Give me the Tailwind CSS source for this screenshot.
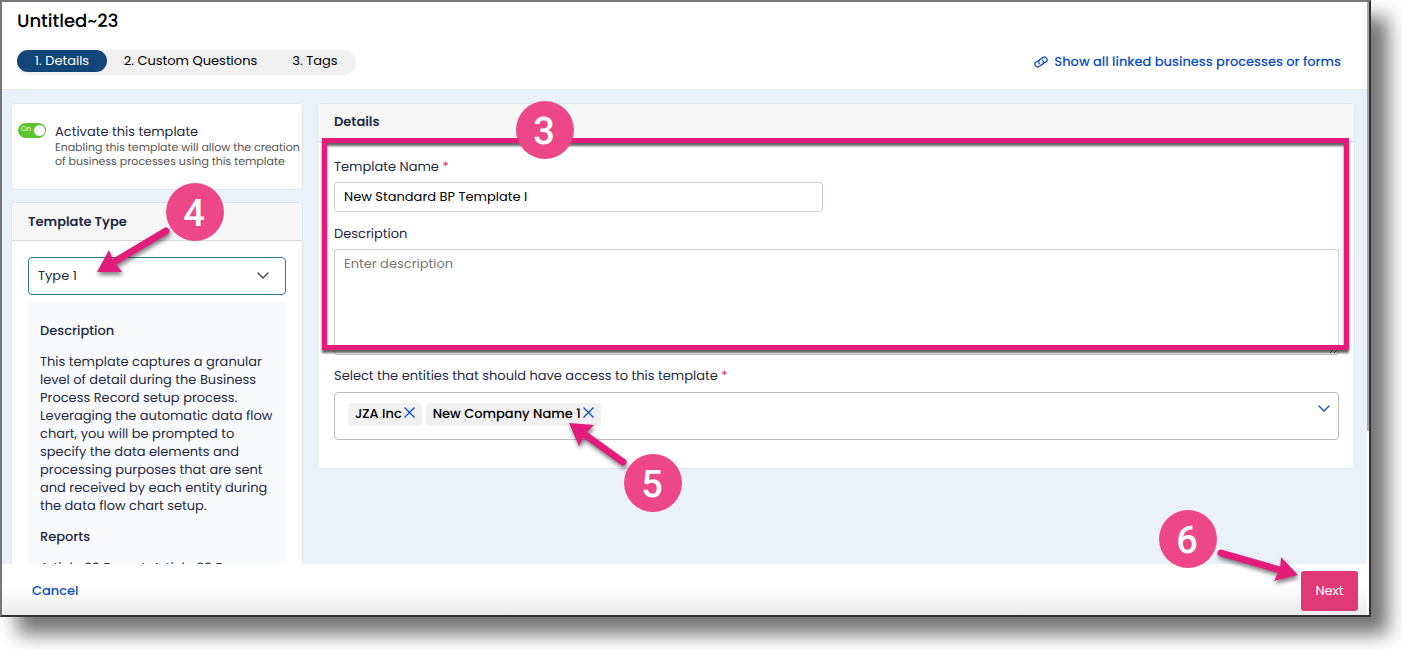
<!DOCTYPE html>
<html lang="en">
<head>
  <meta charset="UTF-8">
  <meta name="viewport" content="width=device-width, initial-scale=1.0">
  <title>Untitled~23</title>
  <script src="https://cdn.jsdelivr.net/npm/@tailwindcss/browser@4"></script>
</head>
<body class="h-screen bg-white pr-[31px] pb-8 font-[Poppins,Inter,sans-serif] text-[13px] text-[#1f2a44] overflow-hidden [text-rendering:geometricPrecision]">

  <div class="flex h-full border-2 border-t-[#777] border-l-[#777] border-r-[#333] border-b-[#333] bg-white shadow-[17px_17px_18px_rgba(0,0,0,0.55)]">
    <div class="flex flex-1 min-w-0 flex-col">

      <header class="border-b border-[#e4e9f0] px-[15px] pt-2 pb-[14px]">
        <h1 class="text-lg leading-6 font-medium text-black">Untitled~23</h1>
        <div class="mt-4 flex items-start justify-between pr-[11px]">
          <nav class="flex h-[25px] rounded-full bg-[#f0f0f0] leading-[22px] text-black">
            <button type="button" class="h-[22px] w-[90px] rounded-full bg-[#124678] text-white">1. Details</button>
            <button type="button" class="h-[22px] w-[167px]">2. Custom Questions</button>
            <button type="button" class="h-[22px] w-[82px]">3. Tags</button>
          </nav>
          <a href="#" class="flex items-center gap-[5px] leading-6 font-medium text-[#0b4fc9]">
            <svg class="h-4 w-4" viewBox="0 0 16 16" fill="none" stroke="currentColor" stroke-width="1.2" stroke-linecap="round">
              <g transform="rotate(-30 8 8)">
                <path d="M9 10.4h3.2a2.600 2.600 0 0 0 0-5.200H8.400a2.600 2.600 0 0 0-2.300 3.900"/>
                <path d="M7 5.600H3.800a2.600 2.600 0 0 0 0 5.200h3.800a2.600 2.600 0 0 0 2.300-3.900"/>
              </g>
            </svg>
            Show all linked business processes or forms
          </a>
        </div>
      </header>

      <div class="flex flex-1 min-h-0 items-start gap-[14px] bg-[#eaf1f9] pt-[13px] pr-3 pl-[9px]">

        <!-- Sidebar -->
        <aside class="flex h-full w-[292px] shrink-0 flex-col gap-3 overflow-hidden">
          <section class="flex gap-2 rounded border border-[#dde7f1] bg-white pt-[18px] pr-1 pb-[21px] pl-1.5">
            <span class="relative mt-px mr-px h-[15px] w-7 shrink-0">
              <input id="activate" type="checkbox" role="switch" checked class="block h-[15px] w-7 appearance-none rounded-full bg-[#5ec42d]">
              <span class="absolute top-0 left-[3px] text-[7px] leading-[14px] text-white pointer-events-none">On</span>
              <span class="absolute top-[2px] right-px h-[11px] w-[11px] rounded-full bg-white pointer-events-none"></span>
            </span>
            <div>
              <label for="activate" class="block pt-0.5 leading-4">Activate this template</label>
              <p class="text-[11px] leading-[14px] text-[#555] whitespace-nowrap">Enabling this template will allow the creation<br>of business processes using this template</p>
            </div>
          </section>

          <section class="relative shrink-0 rounded border border-[#dde7f1] bg-white">
            <h2 class="rounded-t border-b border-[#d5d9de] bg-[#f7f7f7] px-4 leading-[37px] font-semibold"><label for="type">Template Type</label></h2>
            <div class="px-4 pt-4">
              <div class="relative">
                <select id="type" class="h-[38px] w-full appearance-none rounded-[4px] border border-[#2b7f8c] bg-white px-[9px]">
                  <option>Type 1</option>
                </select>
                <svg class="absolute top-[13px] right-[17px] h-3 w-3 pointer-events-none" viewBox="0 0 12 12" fill="none" stroke="#444" stroke-width="1.3" stroke-linecap="round"><path d="M1 3l5 5 5-5"/></svg>
              </div>
              <div class="mt-[7px] flex flex-col gap-[13px] bg-[#f9fafc] px-3 pt-5 pb-5 leading-[18px]">
                <h3 class="font-medium">Description</h3>
                <p class="whitespace-nowrap">This template captures a granular<br>level of detail during the Business<br>Process Record setup process.<br>Leveraging the automatic data flow<br>chart, you will be prompted to<br>specify the data elements and<br>processing purposes that are sent<br>and received by each entity during<br>the data flow chart setup.</p>
                <h3 class="font-medium">Reports</h3>
                <p>Article 30 Report, Article 30 Re...</p>
              </div>
            </div>
            <svg class="absolute top-0 left-[80px] h-[90px] w-[90px] overflow-visible drop-shadow-[1px_3px_2px_rgba(0,0,0,0.5)] pointer-events-none" viewBox="92 203 90 90" fill="#e31b7b" stroke="#e31b7b">
              <path d="M166 231L114 262" stroke-width="7" stroke-linecap="round"/>
              <path d="M97 272L109 250L113 260L122 272Z" stroke="none"/>
            </svg>
            <span class="absolute -top-5 left-[154px] flex h-[58px] w-[58px] items-center justify-center rounded-full bg-[#ee4788] pr-0.5 pt-1 font-[Roboto,sans-serif] text-[38px] font-medium text-white">4</span>
          </section>
        </aside>

        <!-- Details form -->
        <main class="relative min-w-0 flex-1 rounded border border-[#dde7f1] bg-white">
          <h2 class="rounded-t border-b border-[#d5d9de] bg-[#f7f7f7] px-4 pb-px leading-9 font-semibold">Details</h2>
          <form class="relative flex flex-col gap-3 pt-[15px] pr-[15px] pb-7 pl-4 leading-5">
            <div class="grid grid-cols-2 gap-7">
              <div>
                <label for="name" class="mb-[5px] block">Template Name <span class="text-[#e0244f]">*</span></label>
                <input id="name" type="text" value="New Standard BP Template I" class="block h-[30px] w-full rounded-[3px] border border-[#cdd0d8] px-[9px] text-black">
              </div>
            </div>
            <div>
              <label for="description" class="mb-[5px] block">Description</label>
              <textarea id="description" placeholder="Enter description" class="block h-[106px] w-full rounded-[3px] border border-[#cdd0d8] px-[9px] py-1 placeholder:text-[#777]"></textarea>
            </div>
            <div>
              <p class="pb-[7px] leading-[18px]">Select the entities that should have access to this template <span class="text-[#e0244f]">*</span></p>
              <div class="flex h-12 items-start gap-1 rounded-[4px] border border-[#bbb] pt-[10px] pr-2 pl-[13px] font-medium text-black">
                <span class="flex h-[23px] items-center gap-0.5 rounded bg-[#f0f0f0] pr-[7px] pb-0.5 pl-[7px]">JZA Inc
                  <button type="button" aria-label="Remove JZA Inc" class="pb-0.5"><svg class="h-[11px] w-[11px]" viewBox="0 0 11 11" stroke="#0b4fc9" stroke-width="1.3"><path d="M.5.5l10 10M10.5.5l-10 10"/></svg></button>
                </span>
                <span class="flex h-[23px] items-center gap-0.5 rounded bg-[#f0f0f0] pr-[7px] pb-0.5 pl-[7px]">New Company Name 1
                  <button type="button" aria-label="Remove New Company Name 1" class="pb-0.5"><svg class="h-[11px] w-[11px]" viewBox="0 0 11 11" stroke="#0b4fc9" stroke-width="1.3"><path d="M.5.5l10 10M10.5.5l-10 10"/></svg></button>
                </span>
                <button type="button" aria-label="Show entities" class="ml-auto"><svg class="h-3 w-3" viewBox="0 0 12 12" fill="none" stroke="#0b4fc9" stroke-width="1.3" stroke-linecap="round"><path d="M1 3l5 5 5-5"/></svg></button>
              </div>
            </div>
            <div class="absolute -top-1 right-[5px] left-1 h-[212px] border-[5px] border-[#e31b7b] drop-shadow-[0_3px_1px_rgba(0,0,0,0.6)] pointer-events-none"></div>
          </form>
          <span class="absolute -top-[3px] left-[198px] flex h-[58px] w-[58px] items-center justify-center rounded-full bg-[#ee4788] pr-0.5 pt-1 font-[Roboto,sans-serif] text-[38px] font-medium text-white">3</span>
          <svg class="absolute top-[316px] left-[248px] h-[50px] w-[70px] overflow-visible drop-shadow-[1px_3px_2px_rgba(0,0,0,0.5)] pointer-events-none" viewBox="566 420 70 50" fill="#e31b7b" stroke="#e31b7b">
            <path d="M623 462L584 434" stroke-width="7" stroke-linecap="round"/>
            <path d="M569 423L594 425L585 434L579 446Z" stroke="none"/>
          </svg>
          <span class="absolute top-[350px] left-[306px] flex h-[58px] w-[58px] items-center justify-center rounded-full bg-[#ee4788] pr-0.5 pt-1 font-[Roboto,sans-serif] text-[38px] font-medium text-white">5</span>
        </main>
      </div>

      <footer class="relative flex items-center justify-between bg-linear-to-b from-white from-40% to-[#ececec] pt-[7px] pr-[9px] pb-1 pl-[30px]">
        <button type="button" class="font-medium text-[#0b4fc9]">Cancel</button>
        <button type="submit" class="h-10 w-[57px] rounded-[3px] bg-[#e03a76] text-white">Next</button>
        <svg class="absolute -top-3 right-[66px] h-[36px] w-[86px] overflow-visible drop-shadow-[1px_3px_2px_rgba(0,0,0,0.5)] pointer-events-none" viewBox="1215 552 86 36" fill="#e31b7b" stroke="#e31b7b">
          <path d="M1221 553L1280 570" stroke-width="7" stroke-linecap="round"/>
          <path d="M1298 575L1281 557L1280 569L1274 581Z" stroke="none"/>
        </svg>
        <span class="absolute -top-[54px] right-[150px] flex h-[58px] w-[58px] items-center justify-center rounded-full bg-[#ee4788] pr-0.5 pt-1 font-[Roboto,sans-serif] text-[38px] font-medium text-white">6</span>
      </footer>
    </div>

    <!-- scroll thumb -->
    <div class="w-0.5"><div class="h-[70%] bg-[#aaa]"></div></div>
  </div>

</body>
</html>
